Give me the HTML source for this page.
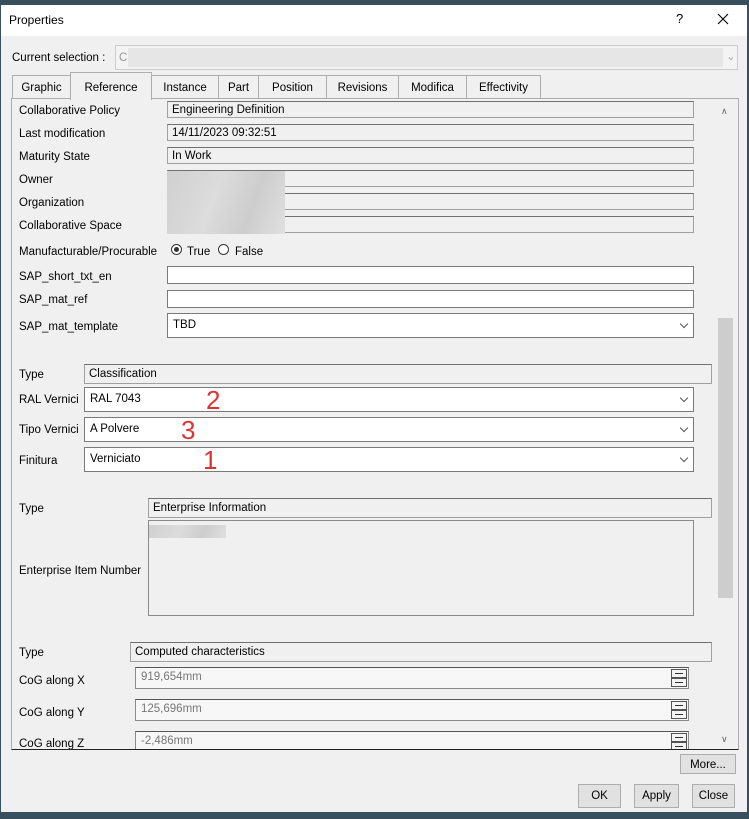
<!DOCTYPE html>
<html><head><meta charset="utf-8"><style>
*{box-sizing:border-box;margin:0;padding:0}
body{width:749px;height:819px;overflow:hidden;background:#f0f0f0;font-family:"Liberation Sans",sans-serif;font-size:11.5px;color:#000;position:relative}
.a{position:absolute}
.t{position:absolute;white-space:nowrap;line-height:14px}
.ro{position:absolute;background:#f0f0f0;border:1px solid #a0a0a0;border-top-color:#707070;padding-left:4px;padding-top:1px;line-height:15px}
.wh{position:absolute;background:#fff;border:1px solid #7a7a7a;padding-left:4px}
.cb{position:absolute;background:#fff;border:1px solid #7a7a7a;padding-left:5px;line-height:23px}
.cb:after{content:"";position:absolute;right:6px;top:7px;width:5px;height:5px;border-right:1px solid #555;border-bottom:1px solid #555;transform:rotate(45deg)}
.tab{position:absolute;top:75px;height:24px;border:1px solid #adadad;border-bottom:none;background:#f0f0f0;text-align:center;line-height:24px}
.btn{position:absolute;background:#e1e1e1;border:1px solid #adadad;text-align:center;line-height:20px}
.sp{position:absolute;background:#f7f7f7;border:1px solid #8a8a8a;border-top-color:#555;color:#777;padding-left:5px;line-height:18px}
.spn{position:absolute;right:1px;top:1px;width:16px;height:18px}
.spn i{position:absolute;left:0;width:16px;height:9px;border:1px solid #555;background:#f4f4f4}
.spn i:before{content:"";position:absolute;left:3px;right:3px;top:3px;border-top:1px solid #333}
.red{position:absolute;color:#d33;font-size:26px;line-height:26px}
.blur{position:absolute;background:linear-gradient(110deg,#d0d0d0,#dcdcdc 40%,#cdcdcd 70%,#e0e0e0)}
</style></head><body>
<div class="a" style="left:0;top:0;width:749px;height:5px;background:#38505e"></div>
<div class="a" style="left:0;top:0;width:1px;height:819px;background:#38505e"></div>
<div class="a" style="left:747px;top:0;width:2px;height:819px;background:#38505e"></div>
<div class="a" style="left:1px;top:5px;width:746px;height:31px;background:#fff"></div>
<div class="t" style="left:9px;top:13px;font-size:12px">Properties</div>
<div class="t" style="left:676px;top:12px;font-size:13px">?</div>
<svg class="a" style="left:717px;top:13px" width="12" height="12"><path d="M1 1L11 11M11 1L1 11" stroke="#000" stroke-width="1.1"/></svg>
<div class="a" style="left:0;top:812px;width:749px;height:7px;background:#38505e"></div>

<div class="t" style="left:12px;top:51px">Current selection :</div>
<div class="a" style="left:115px;top:45px;width:623px;height:25px;border:1px solid #ccc;background:#f3f3f3"></div>
<div class="t" style="left:119px;top:51px;color:#999">C</div>
<div class="a" style="left:128px;top:48px;width:595px;height:19px;background:#e6e6e6"></div>
<div class="t" style="left:726px;top:50px;color:#aaa">⌄</div>

<div class="tab" style="left:12px;width:59px">Graphic</div>
<div class="tab" style="left:151px;width:68px">Instance</div>
<div class="tab" style="left:218px;width:41px">Part</div>
<div class="tab" style="left:258px;width:69px">Position</div>
<div class="tab" style="left:326px;width:73px">Revisions</div>
<div class="tab" style="left:398px;width:69px">Modifica</div>
<div class="tab" style="left:466px;width:75px">Effectivity</div>
<div class="a" style="left:11px;top:98px;width:728px;height:652px;border:1px solid #adadad;border-bottom:1px solid #222;background:#f0f0f0"></div>
<div class="tab" style="left:70px;top:72px;width:82px;height:28px;border-color:#adadad;line-height:30px;z-index:2">Reference</div>

<div class="a" style="left:716px;top:99px;width:21px;height:650px;background:#f0f0f0"></div>
<div class="a" style="left:718px;top:318px;width:15px;height:280px;background:#cdcdcd"></div>
<div class="t" style="left:721px;top:104px;font-size:9px;color:#666">∧</div>
<div class="t" style="left:721px;top:732px;font-size:9px;color:#666">∨</div>

<div class="t" style="left:19px;top:104px">Collaborative Policy</div>
<div class="ro" style="left:167px;top:101px;width:527px;height:17px">Engineering Definition</div>
<div class="t" style="left:19px;top:127px">Last modification</div>
<div class="ro" style="left:167px;top:124px;width:527px;height:17px">14/11/2023 09:32:51</div>
<div class="t" style="left:19px;top:150px">Maturity State</div>
<div class="ro" style="left:167px;top:147px;width:527px;height:17px">In Work</div>
<div class="t" style="left:19px;top:173px">Owner</div>
<div class="ro" style="left:167px;top:170px;width:527px;height:17px"></div>
<div class="t" style="left:19px;top:196px">Organization</div>
<div class="ro" style="left:167px;top:193px;width:527px;height:17px"></div>
<div class="t" style="left:19px;top:219px">Collaborative Space</div>
<div class="ro" style="left:167px;top:216px;width:527px;height:17px"></div>
<div class="blur" style="left:167px;top:171px;width:118px;height:63px"></div>

<div class="t" style="left:19px;top:245px">Manufacturable/Procurable</div>
<div class="a" style="left:171px;top:244px;width:11px;height:11px;border:1px solid #333;border-radius:50%;background:#fff"></div>
<div class="a" style="left:174px;top:247px;width:5px;height:5px;border-radius:50%;background:#333"></div>
<div class="t" style="left:187px;top:245px">True</div>
<div class="a" style="left:218px;top:244px;width:11px;height:11px;border:1px solid #333;border-radius:50%;background:#fff"></div>
<div class="t" style="left:235px;top:245px">False</div>

<div class="t" style="left:19px;top:270px">SAP_short_txt_en</div>
<div class="wh" style="left:167px;top:266px;width:527px;height:18px"></div>
<div class="t" style="left:19px;top:293px">SAP_mat_ref</div>
<div class="wh" style="left:167px;top:290px;width:527px;height:18px"></div>
<div class="t" style="left:19px;top:320px">SAP_mat_template</div>
<div class="cb" style="left:167px;top:313px;width:527px;height:25px">TBD</div>

<div class="t" style="left:19px;top:368px">Type</div>
<div class="ro" style="left:84px;top:364px;width:628px;height:20px;line-height:17px">Classification</div>
<div class="t" style="left:19px;top:393px">RAL Vernici</div>
<div class="cb" style="left:84px;top:387px;width:610px;height:25px">RAL 7043</div>
<div class="t" style="left:19px;top:423px">Tipo Vernici</div>
<div class="cb" style="left:84px;top:417px;width:610px;height:25px">A Polvere</div>
<div class="t" style="left:19px;top:454px">Finitura</div>
<div class="cb" style="left:84px;top:447px;width:610px;height:25px">Verniciato</div>
<div class="red" style="left:206px;top:387px">2</div>
<div class="red" style="left:181px;top:417px">3</div>
<div class="red" style="left:203px;top:447px">1</div>

<div class="t" style="left:19px;top:502px">Type</div>
<div class="ro" style="left:148px;top:498px;width:564px;height:20px;line-height:17px">Enterprise Information</div>
<div class="wh" style="left:148px;top:520px;width:546px;height:96px;background:#f0f0f0;border-color:#8a8a8a"></div>
<div class="blur" style="left:149px;top:525px;width:77px;height:13px"></div>
<div class="t" style="left:19px;top:564px">Enterprise Item Number</div>

<div class="t" style="left:19px;top:646px">Type</div>
<div class="ro" style="left:130px;top:642px;width:582px;height:20px;line-height:17px">Computed characteristics</div>
<div class="t" style="left:19px;top:674px">CoG along X</div>
<div class="sp" style="left:135px;top:667px;width:554px;height:22px">919,654mm<div class="spn"><i style="top:0"></i><i style="top:9px"></i></div></div>
<div class="t" style="left:19px;top:706px">CoG along Y</div>
<div class="sp" style="left:135px;top:699px;width:554px;height:22px">125,696mm<div class="spn"><i style="top:0"></i><i style="top:9px"></i></div></div>
<div class="a" style="left:12px;top:730px;width:703px;height:19px;overflow:hidden">
<div class="t" style="left:7px;top:7px">CoG along Z</div>
<div class="sp" style="left:123px;top:1px;width:554px;height:22px">-2,486mm<div class="spn"><i style="top:0"></i><i style="top:9px"></i></div></div>
</div>

<div class="btn" style="left:680px;top:754px;width:56px;height:20px">More...</div>
<div class="btn" style="left:578px;top:784px;width:43px;height:24px;line-height:22px">OK</div>
<div class="btn" style="left:634px;top:784px;width:45px;height:24px;line-height:22px">Apply</div>
<div class="btn" style="left:692px;top:784px;width:43px;height:24px;line-height:22px">Close</div>
</body></html>
